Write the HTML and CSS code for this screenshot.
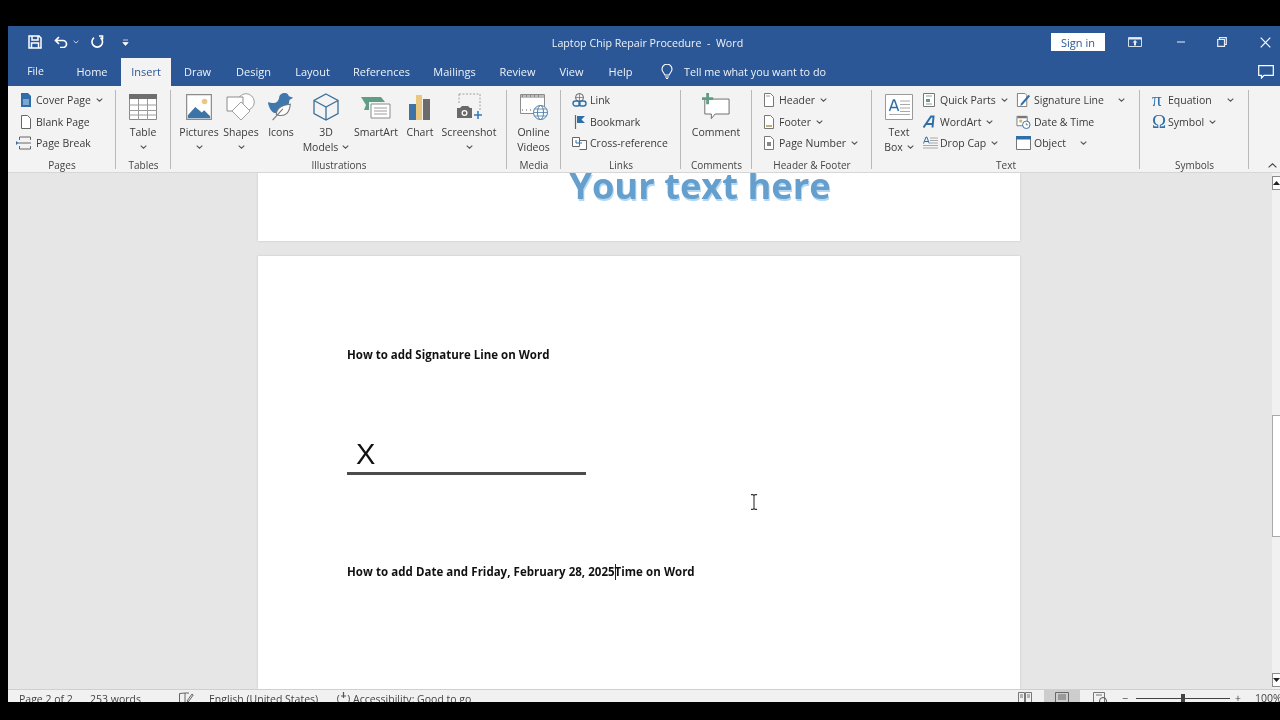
FILE: index.html
```html
<!DOCTYPE html>
<html lang="en">
<head>
<meta charset="utf-8">
<title>Laptop Chip Repair Procedure - Word</title>
<link rel="stylesheet" href="styles.css">
</head>
<body>
<svg class="defs" aria-hidden="true">
  <symbol id="chev" viewBox="0 0 7 4"><path d="M.7.6 3.5 3.2 6.3.6" fill="none" stroke="#555" stroke-width="1.1"/></symbol>
</svg>
<div class="app">
  <header class="titlebar">
    <div class="qat">
      <svg class="q-save" viewBox="0 0 14 14"><path d="M1 1h10l2 2v10H1z M4 1v4h6V1 M3.500 13V8h7v5" fill="none" stroke="#fff" stroke-width="1.500"/></svg>
      <svg class="q-undo" viewBox="0 0 14 12"><path d="M5 1 1.500 4.500 5 8 M2 4.500h7a3.500 3.500 0 0 1 0 7H6" fill="none" stroke="#fff" stroke-width="1.700"/></svg>
      <svg class="q-chev" viewBox="0 0 7 4"><path d="M.7.6 3.500 3.200 6.300.6" fill="none" stroke="#dfe6f2" stroke-width="1"/></svg>
      <svg class="q-redo" viewBox="0 0 14 14"><path d="M10.500 2.600a5.300 5.300 0 1 1-6.500 0 M9 1h3.500v3.500" fill="none" stroke="#fff" stroke-width="1.600"/></svg>
      <svg class="q-more" viewBox="0 0 7 7"><path d="M1 1h5M.8 3.500h5.400L3.500 6.500z" fill="#fff" stroke="#fff" stroke-width=".7"/></svg>
    </div>
    <div class="doc-title">Laptop Chip Repair Procedure&nbsp; -&nbsp; Word</div>
    <div class="win-controls">
      <button class="signin">Sign in</button>
      <svg class="w-display" viewBox="0 0 14 10"><path d="M.5.500h13v9H.5z" fill="none" stroke="#e6ecf6" stroke-width=".9"/><path d="M1 1h12v1.500H1zM7 3 4.500 5.500H6v3h2v-3h1.500z" fill="#e6ecf6"/></svg>
      <svg class="w-min" viewBox="0 0 8 2"><path d="M0 1h8" stroke="#cfd9ea" stroke-width="1.200"/></svg>
      <svg class="w-restore" viewBox="0 0 10 10"><path d="M.7 2.500h6.800v6.800H.7zM2.500 2.500V.7h6.800v6.800H7.500" fill="none" stroke="#e6ecf6" stroke-width="1.200"/></svg>
      <svg class="w-close" viewBox="0 0 11 11"><path d="m.7.700 9.600 9.600M10.300.7.700 10.300" stroke="#fff" stroke-width="1.200"/></svg>
    </div>
  </header>
  <nav class="tabs">
    <span class="tab tab-file">File</span>
    <span class="tab tab-home">Home</span>
    <span class="tab tab-active">Insert</span>
    <span class="tab tab-draw">Draw</span>
    <span class="tab tab-design">Design</span>
    <span class="tab tab-layout">Layout</span>
    <span class="tab tab-refs">References</span>
    <span class="tab tab-mail">Mailings</span>
    <span class="tab tab-review">Review</span>
    <span class="tab tab-view">View</span>
    <span class="tab tab-help">Help</span>
    <svg class="bulb" viewBox="0 0 12 15"><path d="M3.800 11C3.500 9 1 8 1 5.200a5 5 0 0 1 10 0C11 8 8.500 9 8.200 11zM4 13h4M5 14.500h2" fill="none" stroke="#fff" stroke-width="1.100"/></svg>
    <span class="tell">Tell me what you want to do</span>
    <svg class="chat" viewBox="0 0 16 14"><path d="M.7.700h14.600v9.600H6L3.500 13v-2.700H.7z" fill="none" stroke="#fff" stroke-width="1.200"/></svg>
  </nav>
  <section class="ribbon">
    <div class="group g-pages">
      <div class="g-body col">
        <div class="row"><svg class="ri" viewBox="0 0 12 14"><path d="M1 0h7l3 3v11H1z" fill="#2f6ea8"/><path d="M3 7h6M3 9h6M3 11h6" stroke="#cfe0ef"/></svg><span>Cover Page</span><svg class="chev"><use href="#chev"/></svg></div>
        <div class="row"><svg class="ri" viewBox="0 0 12 14"><path d="M1.500.5h6l3 3v10h-9z" fill="#fff" stroke="#666"/></svg><span>Blank Page</span></div>
        <div class="row"><svg class="ri ri-break" viewBox="0 0 16 14"><path d="M3.500 4V1h11v3M3.500 10v3h11v-3M2 7h13" fill="none" stroke="#666"/><path d="m0 5 2.500 2L0 9z" fill="#2f6ea8"/></svg><span>Page Break</span></div>
      </div>
      <div class="g-label">Pages</div>
    </div>
    <div class="group g-tables">
      <div class="g-body">
        <div class="big">
          <svg class="bi bi-s" viewBox="0 0 28 26"><path d="M.5 3.500h27v22H.5z" fill="#fff" stroke="#8a8a8a"/><path d="M0 0h28v5H0z" fill="#6e6e6e"/><path d="M0 11h28M0 16.500h28M0 21h28M9.500 5v21M18.500 5v21" stroke="#9a9a9a"/></svg>
          <span class="l">Table</span>
          <svg class="chev"><use href="#chev"/></svg>
        </div>
      </div>
      <div class="g-label">Tables</div>
    </div>
    <div class="group g-illus">
      <div class="g-body">
        <div class="big w40">
          <svg class="bi bi-s" viewBox="0 0 28 28"><path d="M.7.700h26.600v26.600H.7z" fill="#fff" stroke="#8c8c8c" stroke-width="1.300"/><path d="M2 26V23L10 14l7 6 2.500-2.500L26 24v2z" fill="#3c74a8"/><circle cx="20" cy="8" r="3" fill="#e8c887"/></svg>
          <span class="l">Pictures</span><svg class="chev"><use href="#chev"/></svg>
        </div>
        <div class="big w44">
          <svg class="bi" viewBox="0 0 30 28"><circle cx="20" cy="9" r="8.300" fill="#fff" stroke="#a0a0a0"/><path d="M1 4h16v14H1z" fill="#fff" stroke="#8c8c8c"/><path d="m15 9 9 9-9 9-9-9z" fill="#fff" stroke="#a0a0a0"/></svg>
          <span class="l">Shapes</span><svg class="chev"><use href="#chev"/></svg>
        </div>
        <div class="big w36">
          <svg class="bi" viewBox="0 0 28 30"><path d="M0 10c4 1 6 1 8 .5 2-.5 4-4 4-5.500C12 2 15 0 18 0c3 0 4 2 4.500 3.500L27 5l-4 2.500c0 3-1 6-3 8l-8 3c-2 2-3 3-5 3-3-1-6-5-7-11.500z" fill="#3f78ad"/><path d="M9 23c0-6 5-10 15-11-1 9-5 13-12 12z" fill="#fff" stroke="#777" stroke-width="1.200"/><path d="m5 29 11-12" stroke="#777" stroke-width="1.200"/></svg>
          <span class="l">Icons</span>
        </div>
        <div class="big w54">
          <svg class="bi" viewBox="0 0 26 28"><path d="M13 1 25 7.500v13L13 27 1 20.500v-13zM1 7.500 13 14l12-6.500M13 14v13" fill="none" stroke="#3b7199" stroke-width="1.300"/></svg>
          <span class="l">3D</span><span class="l">Models<svg class="chev inl"><use href="#chev"/></svg></span>
        </div>
        <div class="big w46">
          <svg class="bi bi-s" viewBox="0 0 30 26"><path d="M0 3h20l4 5H8v8H3l2-5z" fill="#5f9d84"/><path d="M10 10h19v14H10z" fill="#fff" stroke="#8c8c8c"/><path d="M13 14h13M13 17h13M13 20h13" stroke="#9c9c9c"/></svg>
          <span class="l">SmartArt</span>
        </div>
        <div class="big w42">
          <svg class="bi bi-s" viewBox="0 0 24 26"><path d="M1 10h7v16H1z" fill="#3f73a5"/><path d="M8 1h6v25H8z" fill="#e9c77e"/><path d="M15 5h7v21h-7z" fill="#6b6b6b"/></svg>
          <span class="l">Chart</span>
        </div>
        <div class="big w56">
          <svg class="bi" viewBox="0 0 26 28"><path d="M3 1h21v17" fill="none" stroke="#a0a0a0" stroke-dasharray="2 1.500"/><path d="M3 1v10" stroke="#a0a0a0" stroke-dasharray="2 1.500"/><path d="M1 15h3l2-2h6l2 2h2v10H1z" fill="#696969"/><circle cx="8.500" cy="20" r="3" fill="#fff"/><circle cx="8.500" cy="20" r="1.700" fill="#696969"/><path d="M22 18v8M18 22h8" stroke="#2f78ba" stroke-width="1.500"/></svg>
          <span class="l">Screenshot</span><svg class="chev"><use href="#chev"/></svg>
        </div>
      </div>
      <div class="g-label">Illustrations</div>
    </div>
    <div class="group g-media">
      <div class="g-body">
        <div class="big">
          <svg class="bi bi-s" viewBox="0 0 28 26"><path d="M.5.500h24v19H.5z" fill="#fff" stroke="#8c8c8c"/><path d="M1 1h23v3H1z" fill="#bdbdbd"/><path d="M2 2h2M6 2h2M10 2h2M14 2h2M18 2h2M2 16h2M6 16h2M10 16h2" stroke="#555" stroke-dasharray="1 1"/><circle cx="20.500" cy="18.500" r="7" fill="#fff" stroke="#4d7ea8"/><ellipse cx="20.500" cy="18.500" rx="3" ry="7" fill="none" stroke="#4d7ea8"/><path d="M13.500 18.500h14M14.500 15h12M14.500 22h12" stroke="#4d7ea8" stroke-width=".8"/></svg>
          <span class="l">Online</span><span class="l">Videos</span>
        </div>
      </div>
      <div class="g-label">Media</div>
    </div>
    <div class="group g-links">
      <div class="g-body col">
        <div class="row"><svg class="ri ri-w" viewBox="0 0 15 14"><circle cx="7.500" cy="4.500" r="4" fill="none" stroke="#666"/><path d="M3.500 4.500h8M7.500.5v8" stroke="#666" stroke-width=".7"/><rect x="1" y="8" width="7" height="5" rx="2.500" fill="none" stroke="#2f6ea8" stroke-width="1.400"/><rect x="7" y="8" width="7" height="5" rx="2.500" fill="none" stroke="#2f6ea8" stroke-width="1.400"/></svg><span>Link</span></div>
        <div class="row"><svg class="ri ri-w" viewBox="0 0 15 14"><path d="M3.500 0v14" stroke="#666" stroke-width="1.200"/><path d="M5 1h8L9.500 4.500 13 8H5z" fill="#2f6ea8"/></svg><span>Bookmark</span></div>
        <div class="row"><svg class="ri ri-w" viewBox="0 0 15 14"><path d="M.5 1.500h7v9h-7zM7.500 4.500h7v9h-7" fill="#fff" stroke="#666"/><path d="M4 4v3h6" fill="none" stroke="#2f6ea8"/></svg><span>Cross-reference</span></div>
      </div>
      <div class="g-label">Links</div>
    </div>
    <div class="group g-comments">
      <div class="g-body">
        <div class="big">
          <svg class="bi" viewBox="0 0 30 30"><path d="M3 6.500h26v16H14l-4 5v-5H3z" fill="#fff" stroke="#666"/><path d="M6 0v12M0 6h12" stroke="#5f9d84" stroke-width="3"/></svg>
          <span class="l">Comment</span>
        </div>
      </div>
      <div class="g-label">Comments</div>
    </div>
    <div class="group g-hf">
      <div class="g-body col">
        <div class="row"><svg class="ri" viewBox="0 0 12 14"><path d="M1.500.5h6l3 3v10h-9z" fill="#fff" stroke="#777"/><path d="M3 3h4" stroke="#999"/></svg><span>Header</span><svg class="chev"><use href="#chev"/></svg></div>
        <div class="row"><svg class="ri" viewBox="0 0 12 14"><path d="M1.500.5h6l3 3v10h-9z" fill="#fff" stroke="#777"/><path d="M3 11h6" stroke="#a89455" stroke-width="1.500"/></svg><span>Footer</span><svg class="chev"><use href="#chev"/></svg></div>
        <div class="row"><svg class="ri" viewBox="0 0 12 14"><path d="M1.500.5h6l3 3v10h-9z" fill="#fff" stroke="#777"/><path d="M4 6h4v4H4z" fill="#888"/></svg><span>Page Number</span><svg class="chev"><use href="#chev"/></svg></div>
      </div>
      <div class="g-label">Header &amp; Footer</div>
    </div>
    <div class="group g-text">
      <div class="g-body">
        <div class="big bx">
          <svg class="bi bi-s" viewBox="0 0 28 26"><path d="M.5.500h27v25H.5z" fill="#fff" stroke="#999"/><path d="M15 7h10M15 10.500h10M15 14h10M15 17.500h10M4 20.500h21" stroke="#aaa"/><path d="M4.500 17 8.500 6h1l4 11M6 13.500h6" fill="none" stroke="#2f6ea8" stroke-width="1.500"/></svg>
          <span class="l">Text</span><span class="l">Box<svg class="chev inl"><use href="#chev"/></svg></span>
        </div>
        <div class="col col-qp">
          <div class="row"><svg class="ri" viewBox="0 0 12 14"><path d="M.5.500h11v13H.5z" fill="#fff" stroke="#777"/><path d="M3 3h6M3 11h6" stroke="#999"/><path d="M3 6h4v3H3z" fill="#5f9d84"/></svg><span>Quick Parts</span><svg class="chev"><use href="#chev"/></svg></div>
          <div class="row"><svg class="ri" viewBox="0 0 12 14"><path d="M.5 12.500 8 1.500h2.500l-1 11M3.500 9h6" fill="none" stroke="#2f6ea8" stroke-width="2"/></svg><span>WordArt</span><svg class="chev"><use href="#chev"/></svg></div>
          <div class="row"><svg class="ri ri-w" viewBox="0 0 15 14"><path d="M.5 7.500 3 1h.8l2.500 6.500M1.500 5.500h4" fill="none" stroke="#2f6ea8"/><path d="M7 2h8M7 4.500h8M7 7h8M0 9.500h15M0 12h15" stroke="#aaa"/></svg><span>Drop Cap</span><svg class="chev"><use href="#chev"/></svg></div>
        </div>
        <div class="col col-sig">
          <div class="row"><svg class="ri ri-w" viewBox="0 0 15 15"><path d="M1 .5h8l2 2v12H1z" fill="#fff" stroke="#777"/><path d="m5 11 8-9 1.500 1.500-8 9L4 14z" fill="#2f6ea8"/></svg><span>Signature Line</span><svg class="chev c-sig"><use href="#chev"/></svg></div>
          <div class="row"><svg class="ri ri-w" viewBox="0 0 15 15"><path d="M.5 1.500h11v10H.5z" fill="#fff" stroke="#777"/><path d="M1 1h10v2.500H1z" fill="#777"/><path d="M3 5h3v3H3z" fill="#e0b060"/><circle cx="10.500" cy="10.500" r="4" fill="#fff" stroke="#2f6ea8"/><path d="M10.500 8.500v2h2" fill="none" stroke="#2f6ea8" stroke-width=".8"/></svg><span>Date &amp; Time</span></div>
          <div class="row"><svg class="ri ri-w" viewBox="0 0 15 14"><path d="M.5.500h14v13H.5z" fill="#fff" stroke="#777"/><path d="M0 0h15v3.500H0z" fill="#2f6ea8"/></svg><span>Object</span><svg class="chev c-obj"><use href="#chev"/></svg></div>
        </div>
      </div>
      <div class="g-label">Text</div>
    </div>
    <div class="group g-symbols">
      <div class="g-body col">
        <div class="row"><span class="sym">π</span><span>Equation</span><svg class="chev c-eq"><use href="#chev"/></svg></div>
        <div class="row"><span class="sym">Ω</span><span>Symbol</span><svg class="chev"><use href="#chev"/></svg></div>
      </div>
      <div class="g-label">Symbols</div>
    </div>
    <div class="collapse">
      <svg class="collapse-ic" viewBox="0 0 9 5"><path d="M.6 4.400 4.500.8l3.900 3.600" fill="none" stroke="#444" stroke-width="1.100"/></svg>
    </div>
  </section>
  <main class="workspace">
    <div class="canvas">
      <div class="page page-prev">
        <div class="wordart">Your text here</div>
      </div>
      <div class="page page-cur">
        <p class="line">How to add Signature Line on Word</p>
        <div class="sig"><span class="sig-x">X</span></div>
        <p class="line line-date">How to add Date and Friday, February 28, 2025<span class="caret"></span>Time on Word</p>
        <svg class="ibeam" viewBox="0 0 8 16"><path d="M1 .6h2l1 1 1-1h2M4 1.500v13M1 15.400h2l1-1 1 1h2" fill="none" stroke="#333" stroke-width="1.100"/></svg>
      </div>
    </div>
    <aside class="scrollbar">
      <div class="sb-btn sb-up"><svg viewBox="0 0 7 4"><path d="M0 4 3.500 0 7 4z" fill="#222"/></svg></div>
      <div class="sb-track">
        <div class="sb-thumb"></div>
      </div>
      <div class="sb-btn sb-down"><svg viewBox="0 0 7 4"><path d="M0 0h7L3.500 4z" fill="#222"/></svg></div>
    </aside>
  </main>
  <footer class="status">
    <span class="st st-page">Page 2 of 2</span>
    <span class="st st-words">253 words</span>
    <svg class="st-book" viewBox="0 0 15 14"><path d="M.5 1.500 6 1v12l-5.500.5zM6 1h4M6 13h6" fill="none" stroke="#666"/><path d="m8 9 5-7 1.200 1-5 7z" fill="none" stroke="#666"/></svg>
    <span class="st st-lang">English (United States)</span>
    <svg class="st-acc" viewBox="0 0 15 14"><path d="M3 3a6 6 0 1 0 9 0" fill="none" stroke="#555"/><path d="M7.500 0v6M5 4h5" stroke="#555" stroke-width="1.200"/></svg>
    <span class="st st-a11y">Accessibility: Good to go</span>
    <div class="st-right">
      <svg class="v-ic" viewBox="0 0 14 13"><path d="M.5.500h6v12h-6zM7.500.500h6v12h-6zM2 3h3M2 5h3M9 3h3M9 5h3" fill="none" stroke="#777"/></svg>
      <div class="v-active"><svg class="v-ic" viewBox="0 0 14 13"><path d="M.5.500h13v12H.5zM3 3h8M3 5h8M3 7h8" fill="none" stroke="#666"/></svg></div>
      <svg class="v-ic" viewBox="0 0 14 13"><path d="M.5.500h11v12H.5zM3 3h6" fill="none" stroke="#777"/><circle cx="10" cy="9" r="3.500" fill="none" stroke="#555"/></svg>
      <span class="z-minus">−</span>
      <div class="slider"><span class="knob"></span></div>
      <span class="z-plus">+</span>
      <span class="z-pct">100%</span>
    </div>
  </footer>
</div>
</body>
</html>
```
FILE: styles.css
```css
* { box-sizing: border-box; }
html, body { margin: 0; height: 100%; }
body {
  background: #000;
  padding: 26px 0 18px 8px;
  overflow: hidden;
  font-family: "Open Sans", "Noto Sans", sans-serif;
  color: #3a3a3a;
}
.defs { width: 0; height: 0; position: absolute; }
svg { display: block; flex: none; }
.app { height: 676px; display: flex; flex-direction: column; overflow: hidden; filter: blur(.3px); }

/* title bar */
.titlebar {
  height: 32px;
  background: #2b5797;
  display: grid;
  grid-template-columns: 1fr auto 1fr;
  align-items: center;
  color: #fff;
  flex: none;
}
.qat { display: flex; align-items: center; padding-left: 20px; }
.q-save { width: 14px; height: 14px; }
.q-undo { width: 14px; height: 12px; margin-left: 12px; }
.q-chev { width: 6px; height: 4px; margin-left: 5px; }
.q-redo { width: 14px; height: 14px; margin-left: 11px; }
.q-more { width: 7px; height: 7px; margin-left: 18px; }
.doc-title { font-size: 10.7px; padding: 2px 0 0 7px; color: #eef2f8; white-space: nowrap; }
.win-controls { display: flex; align-items: center; justify-content: flex-end; }
.signin {
  width: 54px; height: 18px; border: 0; padding: 0; background: #fff; color: #2b5797;
  font: 11px "Open Sans", sans-serif; margin-right: 23px;
}
.w-display { width: 14px; height: 10px; margin-right: 35px; }
.w-min { width: 8px; height: 2px; margin-right: 32px; }
.w-restore { width: 10px; height: 10px; margin-right: 33px; }
.w-close { width: 11px; height: 11px; margin-right: 9px; }

/* tabs */
.tabs {
  height: 28px; background: #2b5797; display: flex; align-items: stretch; flex: none;
  color: #eef2f8; font-size: 11px; position: relative;
}
.tab { display: flex; align-items: center; justify-content: center; padding-bottom: 1px; white-space: nowrap; }
.tab-file { width: 55px; font-size: 10.5px; padding-bottom: 2px; }
.tab-home { width: 58px; }
.tab-active { width: 50px; background: #f3f3f3; color: #2b5797; }
.tab-draw { width: 53px; }
.tab-design { width: 59px; }
.tab-layout { width: 59px; }
.tab-refs { width: 79px; }
.tab-mail { width: 67px; }
.tab-review { width: 59px; }
.tab-view { width: 49px; }
.tab-help { width: 49px; }
.bulb { width: 12px; height: 15px; margin: 6px 0 0 16px; }
.tell { display: flex; align-items: center; margin-left: 11px; padding-bottom: 1px; font-size: 10.8px; white-space: nowrap; }
.chat { width: 16px; height: 14px; margin: 7px 6px 0 auto; }

/* ribbon */
.ribbon {
  height: 87px; background: #f3f3f3; display: flex; flex: none;
  border-bottom: 1px solid #d6d6d6; font-size: 10.5px;
}
.group { position: relative; display: flex; flex-direction: column; padding-top: 4px; flex: none; }
.group::after {
  content: ""; position: absolute; right: 0; top: 4px; bottom: 3px; width: 1px; background: #b9b9b9;
}
.g-body { height: 68px; display: flex; white-space: nowrap; }
.g-label { height: 14px; line-height: 14px; text-align: center; font-size: 10px; color: #444; }
.col { display: flex; flex-direction: column; margin-top: -.5px; }
.row { height: 21.5px; display: flex; align-items: center; flex: none; }
.ri { width: 12px; height: 14px; margin-right: 4px; }
.ri-w { width: 15px; margin-right: 3px; }
.ri-break { width: 16px; margin-left: -4px; }
.chev { width: 7px; height: 4px; margin-left: 5px; }
.chev.inl { display: inline-block; margin-left: 4px; vertical-align: 2px; }
.big { display: flex; flex-direction: column; align-items: center; flex: none; }
.bi { height: 28px; width: 32px; margin: 3px 0 3.5px; }
.bi-s { height: 26px; margin: 4px 0 4.5px; }
.l { height: 15px; line-height: 15px; }
.big > .chev { margin: 5px 0 0; }

.g-pages { width: 108px; }
.g-pages .g-body { padding-left: 12px; }
.g-tables { width: 55px; }
.g-tables .big { width: 54px; }
.g-illus { width: 336px; }
.g-illus .g-body { padding-left: 8px; }
.w36 { width: 36px; } .w40 { width: 40px; } .w42 { width: 42px; } .w44 { width: 44px; }
.w46 { width: 46px; } .w54 { width: 54px; } .w56 { width: 56px; }
.g-media { width: 54px; }
.g-media .big { width: 53px; }
.g-links { width: 120px; }
.g-links .g-body { padding-left: 11px; }
.g-comments { width: 71px; }
.g-comments .big { width: 70px; }
.g-hf { width: 120px; }
.g-hf .g-body { padding-left: 11px; }
.g-text { width: 268px; }
.g-text .g-body { padding-left: 8px; }
.bx { width: 38px; }
.col-qp { width: 98px; padding-left: 5px; }
.col-qp .ri { margin-right: 5px; }
.col-qp .ri-w { margin-right: 2px; }
.c-sig { margin-left: 14px; }
.c-obj { margin-left: 14px; }
.g-symbols { width: 109px; }
.g-symbols .g-body { padding-left: 12px; }
.sym { width: 16px; font: 19px/20px "Liberation Serif", serif; color: #2f6ea8; }
.c-eq { margin-left: 15px; }
.collapse { flex: 1; display: flex; align-items: flex-end; justify-content: flex-end; padding: 0 3px 4px 0; }
.collapse-ic { width: 9px; height: 5px; }

/* workspace */
.workspace { flex: 1; min-height: 0; display: flex; background: #e6e6e6; }
.canvas { flex: 1; overflow: hidden; display: flex; flex-direction: column; padding-left: 250px; padding-right: 252px; }
.page { background: #fff; flex: none; box-shadow: 0 0 2px #c4c4c4; }
.page-prev { height: 68px; margin-bottom: 15px; overflow: hidden; text-align: center; }
.wordart {
  font-weight: 700; font-size: 36.3px; line-height: 24px; padding-left: 122px;
  color: #659fcd; text-shadow: 1px 1.500px 0 #b5d8f0;
}
.page-cur { flex: 1; position: relative; padding: 91px 0 0 89px; }
.line { margin: 0; font-weight: 700; font-size: 11.5px; line-height: 16px; color: #111; white-space: nowrap; }
.sig { width: 239px; height: 48px; margin-top: 64px; border-bottom: 3px solid #4c4c4c; padding: 9px 0 0 9px; }
.sig-x { display: block; font: 29px/36px "Liberation Sans", sans-serif; color: #111; }
.line-date { margin-top: 89px; word-spacing: .2px; }
.caret { display: inline-block; width: 1px; height: 16px; background: #222; vertical-align: -4px; margin-right: -1px; }
.ibeam { position: absolute; left: 492px; top: 238px; width: 8px; height: 16px; }

/* scrollbar */
.scrollbar { width: 8px; flex: none; background: #f1f1f1; display: flex; flex-direction: column; padding: 3px 0 2px; }
.sb-btn { height: 14px; background: #fff; border: 1px solid #8c8c8c; border-right: 0; display: flex; align-items: center; justify-content: center; flex: none; }
.sb-btn svg { width: 7px; height: 4px; }
.sb-track { flex: 1; padding-top: 225px; }
.sb-thumb { height: 122px; background: #fff; border: 1px solid #a8a8a8; border-right: 0; }

/* status */
.status {
  height: 13px; flex: none; background: #f1f1f1; border-top: 1px solid #cfcfcf;
  display: flex; align-items: flex-start; padding-top: 1px; font-size: 10.5px; color: #444; overflow: hidden; white-space: nowrap;
}
.st { line-height: 14px; padding-top: 1px; }
.st-page { margin-left: 11px; width: 71px; }
.st-words { width: 89px; }
.st-book { width: 15px; height: 14px; margin: 1px 15px 0 0; }
.st-lang { width: 127px; }
.st-acc { width: 15px; height: 14px; margin: 1px 2px 0 0; }
.st-right { margin: -1px 0 0 auto; display: flex; align-items: flex-start; }
.v-ic { width: 14px; height: 13px; margin-top: 2px; }
.v-active { width: 36px; height: 13px; background: #cdcdcd; margin: 0 13px 0 12px; display: flex; justify-content: center; }
.z-minus { margin-left: 15px; line-height: 16px; }
.slider { width: 94px; height: 1px; background: #444; margin: 8px 0 0 8px; position: relative; }
.knob { position: absolute; left: 45px; top: -4px; width: 4px; height: 9px; background: #444; }
.z-plus { margin-left: 5px; line-height: 16px; }
.z-pct { margin-left: 14px; line-height: 16px; width: 25px; }
```
